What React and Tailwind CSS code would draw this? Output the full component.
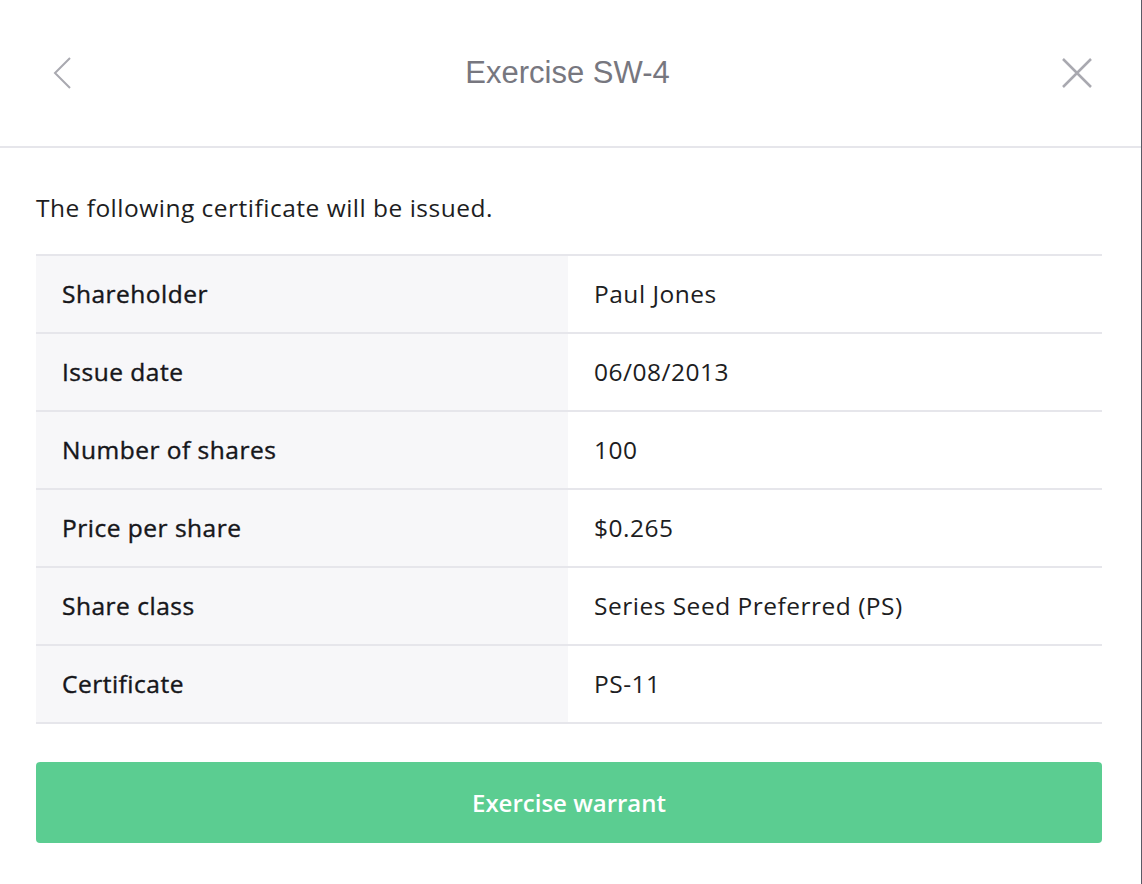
import React from "react";

const rows = [
  { label: "Shareholder", value: "Paul Jones" },
  { label: "Issue date", value: "06/08/2013" },
  { label: "Number of shares", value: "100" },
  { label: "Price per share", value: "$0.265" },
  { label: "Share class", value: "Series Seed Preferred (PS)" },
  { label: "Certificate", value: "PS-11" },
];

const App = () => {
  return (
    <div className="w-[1142px] h-[884px] bg-white border-r border-[#5a5a66] font-['Open_Sans','Liberation_Sans',sans-serif] text-[#1d1d22]">
      {/* header */}
      <div className="h-[148px] border-b-2 border-[#e6e6eb] flex items-center justify-between pl-[50px] pr-[48px]">
        <button className="w-[24px] h-[36px] flex items-center justify-center">
          <svg width="22" height="34" viewBox="0 0 22 34" fill="none">
            <path d="M19 2 L4 17 L19 32" stroke="#a9a9b0" strokeWidth="2" />
          </svg>
        </button>
        <h1 className="text-[31px] text-[#77777f] font-['Liberation_Sans',sans-serif]">
          Exercise SW-4
        </h1>
        <button className="w-[32px] h-[32px] flex items-center justify-center">
          <svg width="32" height="32" viewBox="0 0 32 32" fill="none">
            <path d="M2 2 L30 30 M30 2 L2 30" stroke="#a9a9b0" strokeWidth="2.5" />
          </svg>
        </button>
      </div>

      {/* body */}
      <div className="pl-[36px] pr-[39px] text-[24.5px] tracking-[0.5px]">
        <p className="mt-[44px] leading-[32px]">
          The following certificate will be issued.
        </p>
        <div className="mt-[30px] border-t-2 border-[#e6e6eb]">
          {rows.map((row) => (
            <div key={row.label} className="flex h-[78px] border-b-2 border-[#e6e6eb]">
              <div className="w-[532px] bg-[#f7f7f9] flex items-center pl-[26px] text-[#16161a] [-webkit-text-stroke:0.4px_#16161a]">
                {row.label}
              </div>
              <div className="flex-1 flex items-center pl-[26px]">
                {row.value}
              </div>
            </div>
          ))}
        </div>
        <button className="mt-[38px] w-full h-[81px] rounded-[4px] bg-[#5bcd91] text-white text-[24px] tracking-normal font-semibold">
          Exercise warrant
        </button>
      </div>
    </div>
  );
};

export default App;
